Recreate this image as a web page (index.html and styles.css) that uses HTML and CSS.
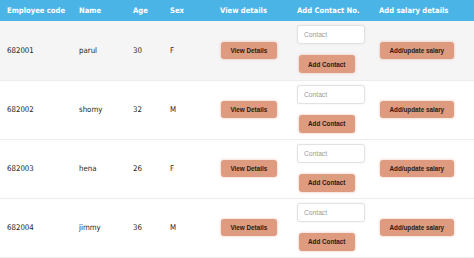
FILE: index.html
```html
<!DOCTYPE html>
<html lang="en">
<head>
    <meta charset="UTF-8">
    <meta name="viewport" content="width=device-width, initial-scale=1.0">
    <title>Employees</title>
    <link rel="stylesheet" href="styles.css">
</head>
<body>

<table class="emp-table">
    <thead>
        <tr>
            <th class="col-code">Employee code</th>
            <th class="col-name">Name</th>
            <th class="col-age">Age</th>
            <th class="col-sex">Sex</th>
            <th class="col-view">View details</th>
            <th class="col-contact">Add Contact No.</th>
            <th class="col-salary">Add salary details</th>
        </tr>
    </thead>
    <tbody>
        <tr class="active">
            <td>682001</td>
            <td>parul</td>
            <td>30</td>
            <td>F</td>
            <td><button class="btn">View Details</button></td>
            <td class="contact-cell">
                <input type="text" class="contact-input" placeholder="Contact">
                <button class="btn btn-contact">Add Contact</button>
            </td>
            <td><button class="btn">Add/update salary</button></td>
        </tr>
        <tr>
            <td>682002</td>
            <td>shomy</td>
            <td>32</td>
            <td>M</td>
            <td><button class="btn">View Details</button></td>
            <td class="contact-cell">
                <input type="text" class="contact-input" placeholder="Contact">
                <button class="btn btn-contact">Add Contact</button>
            </td>
            <td><button class="btn">Add/update salary</button></td>
        </tr>
        <tr>
            <td>682003</td>
            <td>hena</td>
            <td>26</td>
            <td>F</td>
            <td><button class="btn">View Details</button></td>
            <td class="contact-cell">
                <input type="text" class="contact-input" placeholder="Contact">
                <button class="btn btn-contact">Add Contact</button>
            </td>
            <td><button class="btn">Add/update salary</button></td>
        </tr>
        <tr>
            <td>682004</td>
            <td>jimmy</td>
            <td>36</td>
            <td>M</td>
            <td><button class="btn">View Details</button></td>
            <td class="contact-cell">
                <input type="text" class="contact-input" placeholder="Contact">
                <button class="btn btn-contact">Add Contact</button>
            </td>
            <td><button class="btn">Add/update salary</button></td>
        </tr>
    </tbody>
</table>

</body>
</html>
```

FILE: styles.css
```css
* {
    margin: 0;
    padding: 0;
    box-sizing: border-box;
}

body {
    font-family: 'DejaVu Sans Condensed', 'DejaVu Sans', Tahoma, sans-serif;
    background: #fff;
    color: #262626;
}

/* Employee table */
.emp-table {
    width: 474px;
    border-collapse: collapse;
    table-layout: fixed;
}

.emp-table th {
    background-color: #4bb4e6;
    color: #fff;
    font-size: 7.6px;
    font-weight: bold;
    text-align: left;
    height: 21px;
    padding: 0 0 1px 7px;
    white-space: nowrap;
}

.col-code { width: 72px; }
.col-name { width: 54px; }
.col-age { width: 37px; }
.col-sex { width: 50px; }
.col-view { width: 77px; }
.col-contact { width: 82px; }
.col-salary { width: 102px; }

.emp-table td {
    font-size: 7.8px;
    padding: 0 0 0 7px;
    height: 59px;
    vertical-align: middle;
    border-bottom: 1px solid #ececec;
}

.emp-table tr.active td {
    background-color: #f5f5f5;
}

.emp-table td.contact-cell {
    padding: 4px 0 6px 7px;
}

/* Buttons */
.btn {
    font-family: 'Liberation Sans', Arial, sans-serif;
    font-size: 6.3px;
    font-weight: bold;
    color: #2a1a14;
    background-color: #df9b80;
    border: none;
    border-radius: 3px;
    height: 17.5px;
    padding: 0 9.5px;
    margin-left: 1px;
    box-shadow: 0 0 3px rgba(223, 155, 128, 0.6);
    cursor: pointer;
}

.btn:hover {
    background-color: #d58d70;
}

.btn-contact {
    display: block;
    margin-left: 1.5px;
    height: 18px;
}

.contact-input {
    display: block;
    width: 68px;
    height: 19px;
    margin-bottom: 11px;
    padding: 0 6px;
    font-family: 'Liberation Sans', Arial, sans-serif;
    font-size: 6.7px;
    border: 1px solid #e2e2e2;
    border-radius: 3px;
    box-shadow: 0 0 2px rgba(0, 0, 0, 0.08);
    outline: none;
}

.contact-input::placeholder {
    color: #9a9a9a;
}
```
